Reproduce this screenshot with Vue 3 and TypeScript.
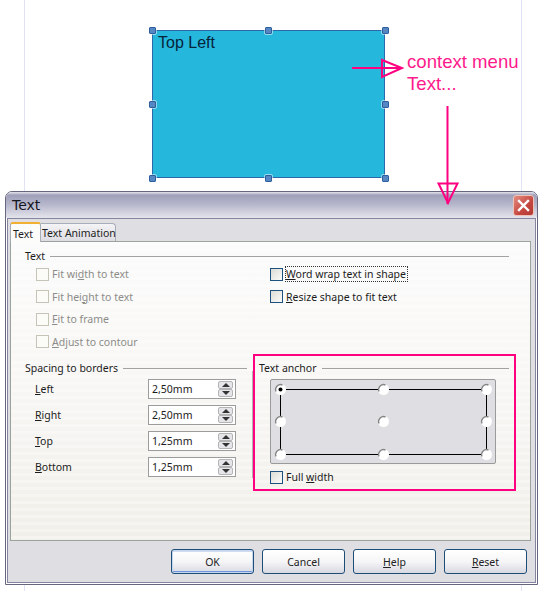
<script setup lang="ts">
type Label = { pre: string; key: string; post: string; y?: number }

const handles = [
  { x: 152, y: 30 }, { x: 268.5, y: 30 }, { x: 385, y: 30 },
  { x: 152, y: 104 }, { x: 385, y: 104 },
  { x: 152, y: 178 }, { x: 268.5, y: 178 }, { x: 385, y: 178 }
]

const fitOptions: Label[] = [
  { pre: 'Fit wi', key: 'd', post: 'th to text' },
  { pre: 'Fit hei', key: 'g', post: 'ht to text' },
  { pre: '', key: 'F', post: 'it to frame' },
  { pre: '', key: 'A', post: 'djust to contour' }
]

const spacing = [
  { key: 'L', post: 'eft', value: '2,50mm' },
  { key: 'R', post: 'ight', value: '2,50mm' },
  { key: 'T', post: 'op', value: '1,25mm' },
  { key: 'B', post: 'ottom', value: '1,25mm' }
]

const buttons: Label[] = [
  { pre: 'OK', key: '', post: '' },
  { pre: 'Cancel', key: '', post: '' },
  { pre: '', key: 'H', post: 'elp' },
  { pre: '', key: 'R', post: 'eset' }
]

const anchorX = [9, 112, 215]
const anchorY = [9, 41, 74]
</script>

<template>
  <div class="stage">
    <span class="guide guide-left"></span>
    <span class="guide guide-right"></span>

    <div class="shape">Top Left</div>
    <span v-for="h in handles" :key="`${h.x}-${h.y}`" class="handle" :style="{ left: `${h.x - 3.5}px`, top: `${h.y - 3.5}px` }"></span>
    <div class="note">context menu<br />Text...</div>

    <div class="dialog">
      <div class="titlebar">
        <span class="title">Text</span>
        <span class="close">
          <svg width="13" height="13" viewBox="0 0 13 13">
            <path d="M2 2 L11 11 M11 2 L2 11" stroke="#fff" stroke-width="2.4" stroke-linecap="square" />
          </svg>
        </span>
      </div>

      <div class="body">
        <div class="tabs">
          <span class="tab active">Text</span>
          <span class="tab">Text Animation</span>
        </div>

        <div class="pane">
          <div class="group-head"><span>Text</span><i></i></div>
          <div class="options">
            <div class="col-left">
              <label v-for="o in fitOptions" :key="o.post" class="check disabled">
                <span class="box"></span>
                <span>{{ o.pre }}<u>{{ o.key }}</u>{{ o.post }}</span>
              </label>
            </div>
            <div class="col-right">
              <label class="check">
                <span class="box"></span>
                <span class="focus"><u>W</u>ord wrap text in shape</span>
              </label>
              <label class="check">
                <span class="box"></span>
                <span><u>R</u>esize shape to fit text</span>
              </label>
            </div>
          </div>

          <div class="lower">
            <div class="spacing">
              <div class="group-head"><span>Spacing to borders</span><i></i></div>
              <div class="spin-list">
                <div v-for="s in spacing" :key="s.key" class="spin-row">
                  <span class="spin-label"><u>{{ s.key }}</u>{{ s.post }}</span>
                  <div class="field">
                    <span>{{ s.value }}</span>
                    <div class="spinner">
                      <span class="spin-btn"><b class="up"></b></span>
                      <span class="spin-btn"><b class="down"></b></span>
                    </div>
                  </div>
                </div>
              </div>
            </div>

            <div class="anchor">
              <div class="group-head"><span>Text anchor</span><i></i></div>
              <svg class="anchor-box" width="224" height="83" viewBox="0 0 224 83">
                <rect x="9.5" y="9.5" width="206" height="65" fill="none" stroke="#000" />
                <g v-for="y in anchorY" :key="y">
                  <g v-for="x in anchorX" :key="x">
                    <circle :cx="x + 0.5" :cy="y + 0.5" r="5.5" fill="#fff" />
                    <path :d="`M${x - 4} ${y + 2.5} A5 5 0 0 1 ${x + 2.5} ${y - 4}`" fill="none" stroke="#858585" stroke-width="1.4" />
                  </g>
                </g>
                <circle cx="9.5" cy="9.5" r="2" fill="#000" />
              </svg>
              <label class="check full">
                <span class="box"></span>
                <span>Full <u>w</u>idth</span>
              </label>
            </div>
          </div>
        </div>

        <div class="footer">
          <button v-for="(b, i) in buttons" :key="i" type="button" class="btn" :class="{ primary: i === 0 }">
            {{ b.pre }}<u v-if="b.key">{{ b.key }}</u>{{ b.post }}
          </button>
        </div>
      </div>
    </div>

    <div class="highlight"></div>

    <svg class="arrows" width="543" height="591" viewBox="0 0 543 591">
      <g fill="none" stroke="#ff0080" stroke-width="2">
        <path d="M352 68 H402" />
        <path d="M382 60 L402 68 L382 77 Z" />
        <path d="M447.5 106 V204" />
        <path d="M438.5 183.5 H457.5 L448 203 Z" />
      </g>
    </svg>
  </div>
</template>

<style>
html,
body {
  margin: 0;
  background: #fff;
  overflow: hidden;
}
</style>

<style scoped>
.stage {
  position: relative;
  width: 543px;
  height: 591px;
  padding-top: 191px;
  box-sizing: border-box;
  overflow: hidden;
  background: #fff;
  font-family: "Noto Sans", "Liberation Sans", sans-serif;
  font-size: 10.5px;
  color: #1c1c1c;
}

.guide {
  position: absolute;
  top: 0;
  bottom: 0;
  width: 1px;
  background: #e2e2f6;
}

.guide-left {
  left: 24px;
}

.guide-right {
  left: 521px;
}

.shape {
  position: absolute;
  left: 152px;
  top: 30px;
  width: 233px;
  height: 148px;
  box-sizing: border-box;
  border: 1px solid #2b69ad;
  background: #25b7dc;
  padding: 2px 0 0 5px;
  font-family: "Liberation Sans", sans-serif;
  font-size: 16px;
  line-height: 20px;
  color: #06233a;
}

.handle {
  position: absolute;
  width: 7px;
  height: 7px;
  box-sizing: border-box;
  border: 1px solid #2d5f9c;
  background: #5687c2;
  outline: 1px solid rgba(255, 255, 255, 0.5);
  border-radius: 1px;
}

.note {
  position: absolute;
  left: 407px;
  top: 51px;
  font-family: "Liberation Sans", sans-serif;
  font-size: 18.6px;
  line-height: 22px;
  color: #ff1a8c;
  white-space: nowrap;
}

.dialog {
  position: relative;
  margin-left: 5px;
  width: 533px;
  height: 394px;
  box-sizing: border-box;
  border: 1px solid #66667f;
  border-radius: 7px 7px 0 0;
  padding: 0 1px 1px;
  background: #fff;
  display: flex;
  flex-direction: column;
}

.titlebar {
  height: 26px;
  margin: 0 -1px;
  flex: none;
  display: flex;
  align-items: center;
  justify-content: space-between;
  padding: 0 3px 0 6px;
  border-radius: 6px 6px 0 0;
  background: linear-gradient(#e6e6ee 0, #9f9fba 12%, #b4b4ca 45%, #e4e4ec 100%);
}

.title {
  font-family: "DejaVu Sans", sans-serif;
  font-size: 14px;
  color: #15151f;
}

.close {
  width: 21px;
  height: 21px;
  box-sizing: border-box;
  border: 1px solid #efc3b5;
  border-radius: 3px;
  background: linear-gradient(135deg, #e58c80, #c4473f 60%, #b23a35);
  display: flex;
  align-items: center;
  justify-content: center;
}

.body {
  flex: 1;
  box-sizing: border-box;
  border: 1px solid #8585a0;
  background: #dfdee3;
  padding: 2px 0 0 2px;
}

.tabs {
  height: 20px;
  display: flex;
  align-items: flex-end;
}

.tab {
  width: 75px;
  height: 18px;
  box-sizing: border-box;
  padding: 2px 0 0 1px;
  border: 1px solid #a7aeb8;
  border-bottom: 0;
  border-left: 0;
  border-radius: 0 4px 0 0;
  background: linear-gradient(#f4f4f6, #dcdce2);
  line-height: 15px;
  white-space: nowrap;
}

.tab.active {
  height: 20px;
  width: 31px;
  padding: 3px 0 0 2px;
  border-left: 1px solid #a7aeb8;
  border-top: 2px solid #f2b033;
  border-radius: 3px 3px 0 0;
  background: #fcfcfa;
  margin-bottom: -1px;
  position: relative;
}

.pane {
  width: 521px;
  height: 300px;
  box-sizing: border-box;
  border: 1px solid #9aa39c;
  padding: 7px 21px 0 14px;
  background:
    repeating-linear-gradient(180deg, rgba(255, 255, 255, 0.3) 0 3px, rgba(255, 255, 255, 0) 3px 7px),
    linear-gradient(#fbfbfb 0, #f8f7f5 45%, #f1efe9 100%);
}

.group-head {
  height: 14px;
  display: flex;
  align-items: center;
  gap: 5px;
  line-height: 14px;
  white-space: nowrap;
}

.group-head i {
  flex: 1;
  height: 1px;
  background: #a2a2a2;
}

.options {
  display: flex;
  padding-left: 11px;
  height: 98px;
}

.col-left {
  width: 234px;
}

.check {
  height: 22.5px;
  display: flex;
  align-items: center;
  gap: 3px;
  white-space: nowrap;
}

.box {
  width: 13px;
  height: 13px;
  flex: none;
  box-sizing: border-box;
  border: 1px solid #1c5180;
  background: linear-gradient(135deg, #dcdcd6, #fbfbf9);
}

.disabled {
  color: #8c8c88;
}

.disabled .box {
  border-color: #c6c4b6;
  background: #fbfbf8;
}

.focus {
  outline: 1px dotted #333;
  padding-right: 1px;
}

.lower {
  display: flex;
}

.spacing {
  width: 222px;
  padding-right: 5px;
  height: 124px;
  flex: none;
}

.spin-list {
  padding: 4px 0 0 10px;
}

.spin-row {
  height: 26px;
  display: flex;
  align-items: flex-start;
}

.spin-label {
  width: 113px;
  line-height: 20px;
}

.field {
  width: 88px;
  height: 20px;
  box-sizing: border-box;
  border: 1px solid #9c9c9c;
  background: #fff;
  padding-left: 3px;
  line-height: 18px;
  display: flex;
  justify-content: space-between;
}

.spinner {
  width: 15px;
  margin: 1px 2px 0 0;
  display: flex;
  flex-direction: column;
}

.spin-btn {
  height: 8px;
  box-sizing: border-box;
  border: 1px solid #b4b4b4;
  border-radius: 2px;
  background: #e6e6ea;
  display: flex;
  align-items: center;
  justify-content: center;
}

.spin-btn b {
  width: 0;
  height: 0;
  border-left: 4px solid transparent;
  border-right: 4px solid transparent;
}

.spin-btn .up {
  border-bottom: 4px solid #333;
}

.spin-btn .down {
  border-top: 4px solid #333;
}

.anchor {
  flex: 1;
  padding-left: 7px;
  height: 124px;
  background: linear-gradient(#b4b4b4, #b4b4b4) 0 10px / 1px 107px no-repeat;
}

.anchor-box {
  display: block;
  margin: 4px 0 0 11px;
  border: 1px solid #9a9a9a;
  border-radius: 2px;
  background: #dfdee3;
  overflow: visible;
}

.full {
  margin: 2px 0 0 11px;
}

.footer {
  margin-top: 8px;
  padding-right: 8px;
  display: flex;
  justify-content: flex-end;
  gap: 8px;
}

.btn {
  width: 83px;
  height: 25px;
  box-sizing: border-box;
  padding: 0;
  border: 1px solid #1d4e78;
  border-radius: 3px;
  background: linear-gradient(#fff, #f6f6f8 50%, #d8d8e2);
  font: inherit;
  color: #222;
}

.btn.primary {
  box-shadow: inset 0 0 0 1px #c6d6ef, inset 0 -2px 0 #6e96dc, inset 0 2px 0 #cfdcf2;
}

.highlight {
  position: absolute;
  left: 253px;
  top: 354px;
  width: 263px;
  height: 137px;
  box-sizing: border-box;
  border: 2px solid #ff0080;
}

.arrows {
  position: absolute;
  left: 0;
  top: 0;
  pointer-events: none;
}
</style>
